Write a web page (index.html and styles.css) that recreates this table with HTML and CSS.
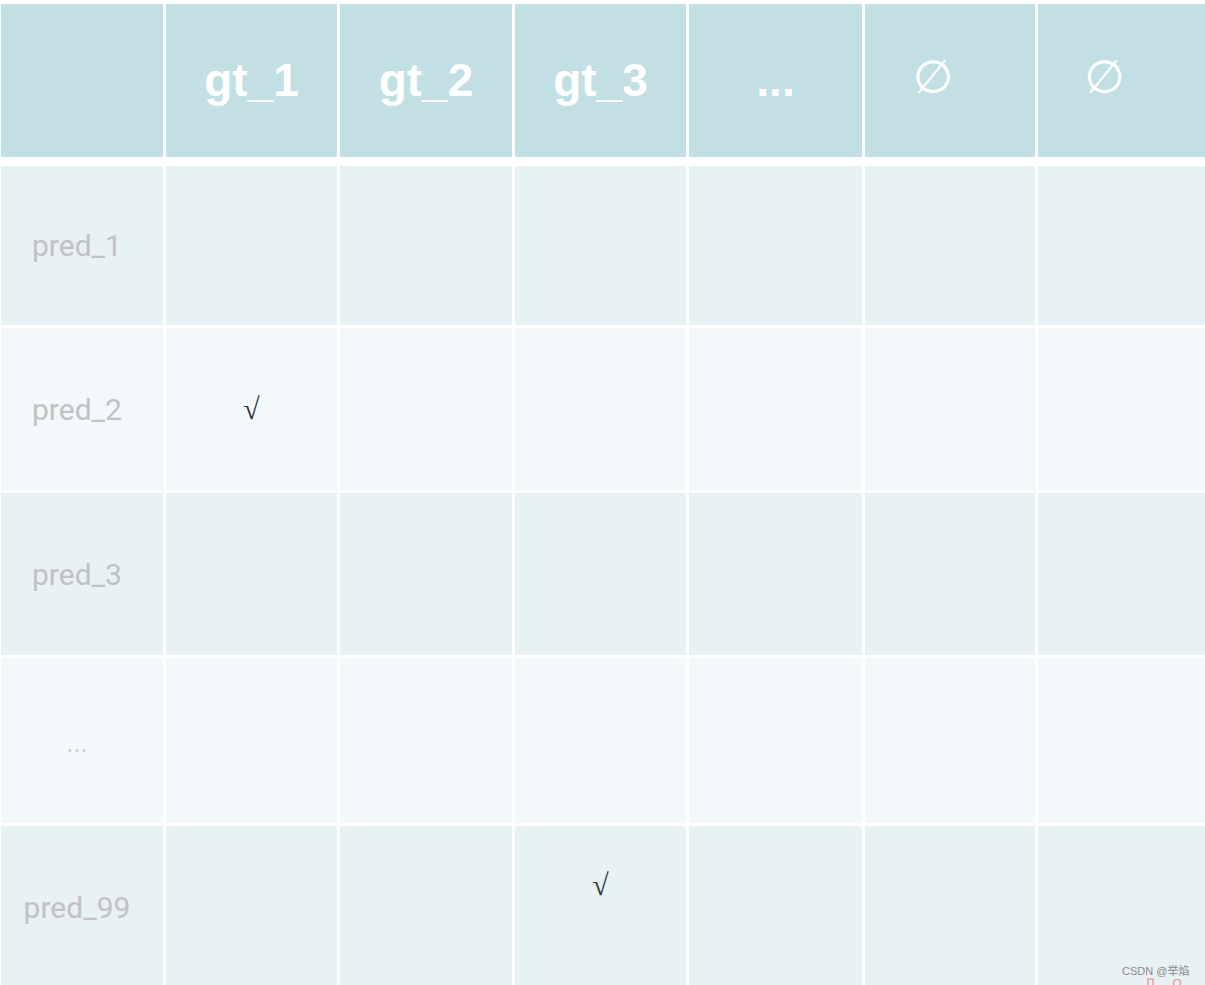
FILE: index.html
```html
<!DOCTYPE html>
<html lang="zh">
<head>
<meta charset="utf-8">
<title>Matching table</title>
<link rel="stylesheet" href="styles.css">
</head>
<body>
<div class="table">
  <div class="row head">
    <div class="cell"></div>
    <div class="cell">gt_1</div>
    <div class="cell">gt_2</div>
    <div class="cell">gt_3</div>
    <div class="cell">...</div>
    <div class="cell empty">∅</div>
    <div class="cell empty">∅</div>
  </div>
  <div class="row odd r1">
    <div class="cell label">pred_1</div>
    <div class="cell"></div><div class="cell"></div><div class="cell"></div>
    <div class="cell"></div><div class="cell"></div><div class="cell"></div>
  </div>
  <div class="row even">
    <div class="cell label">pred_2</div>
    <div class="cell"><span class="check">√</span></div>
    <div class="cell"></div><div class="cell"></div>
    <div class="cell"></div><div class="cell"></div><div class="cell"></div>
  </div>
  <div class="row odd">
    <div class="cell label">pred_3</div>
    <div class="cell"></div><div class="cell"></div><div class="cell"></div>
    <div class="cell"></div><div class="cell"></div><div class="cell"></div>
  </div>
  <div class="row even r4">
    <div class="cell label dots">...</div>
    <div class="cell"></div><div class="cell"></div><div class="cell"></div>
    <div class="cell"></div><div class="cell"></div><div class="cell"></div>
  </div>
  <div class="row odd">
    <div class="cell label">pred_99</div>
    <div class="cell"></div><div class="cell"></div>
    <div class="cell high"><span class="check">√</span></div>
    <div class="cell"></div><div class="cell"></div><div class="cell"></div>
  </div>
</div>
<div class="watermark">CSDN @举焰</div>
<div class="marks">
  <svg width="40" height="8" viewBox="0 0 40 8"><rect x="2" y="2" width="5" height="8" fill="none" stroke="#e88a8a" stroke-width="1.2"/><circle cx="31" cy="6" r="3.5" fill="none" stroke="#e88a8a" stroke-width="1.2"/></svg>
</div>
</body>
</html>
```
FILE: styles.css
```css
html, body {
  margin: 0;
  padding: 0;
  background: #ffffff;
  width: 1205px;
  height: 985px;
  overflow: hidden;
}
body {
  position: relative;
  font-family: Roboto, "Liberation Sans", sans-serif;
}
.table {
  margin: 4px 0 0 1px;
  display: flex;
  flex-direction: column;
  gap: 3px;
}
.row {
  display: grid;
  grid-template-columns: 162px 171px 172px 171px 173px 170px 167px;
  column-gap: 3px;
  height: 162px;
}
.row.r1 { height: 159px; }
.row.r4 { height: 165px; }
.row.head {
  height: 153px;
  margin-bottom: 6px;
}
.cell {
  display: flex;
  align-items: center;
  justify-content: center;
}
.head .cell {
  background: #c2dfe3;
  color: #ffffff;
  font-family: "Liberation Sans", Arial, sans-serif;
  font-weight: bold;
  font-size: 46px;
  padding-bottom: 2px;
}
.head .cell.empty {
  font-family: "DejaVu Sans", sans-serif;
  font-weight: normal;
  font-size: 46px;
  padding-bottom: 8px;
  padding-right: 34px;
}
.odd .cell { background: #e8f1f4; }
.even .cell { background: #f3f9fa; }
.label {
  color: #c2c2c2;
  font-size: 30px;
  padding-right: 10px;
}
.label.dots {
  font-size: 27px;
  color: #cccccc;
  padding-top: 4px;
}
.check {
  font-family: "Liberation Serif", "DejaVu Serif", serif;
  font-size: 30px;
  color: #333333;
}
.cell.high { padding-bottom: 44px; }
.watermark {
  position: absolute;
  left: 1122px;
  top: 962px;
  font-family: "Liberation Sans", "Noto Sans CJK SC", sans-serif;
  font-size: 11px;
  color: #8a8a8a;
}
.marks {
  position: absolute;
  left: 1146px;
  top: 977px;
  line-height: 0;
}
```
